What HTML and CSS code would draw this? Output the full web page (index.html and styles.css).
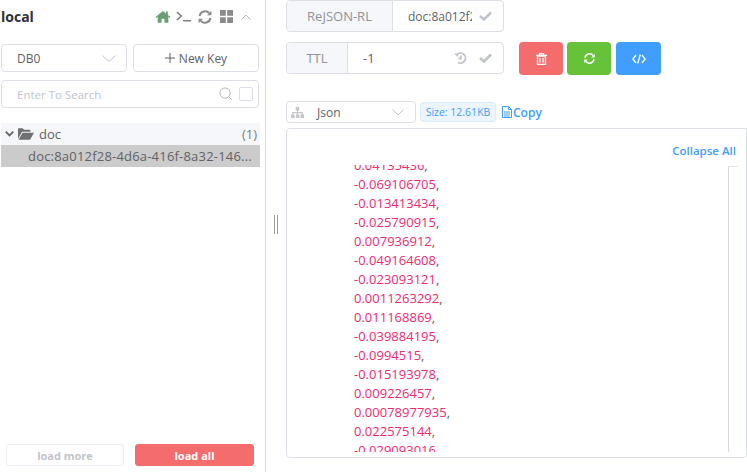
FILE: index.html
```html
<!DOCTYPE html>
<html lang="en">
<head>
<meta charset="utf-8">
<title>local</title>
<link rel="stylesheet" href="styles.css">
</head>
<body>
<div class="app">
  <aside class="side">
    <div class="conn">
      <span class="conn-name">local</span>
      <span class="conn-icons">
        <svg width="16" height="13" viewBox="0 0 18 14"><path fill="#6a9f74" d="M9 .8 .6 7.600l.9 1L3 7.400V14h4.400V9.600h3.200V14H15V7.400l1.500 1.200.9-1-3-2.400V1.500h-2v2.100z"/></svg>
        <svg class="ic-prompt" width="16" height="11" viewBox="0 0 18 12"><path fill="none" stroke="#777" stroke-width="1.600" d="M1 1l5 4.500-5 4.500"/><path stroke="#777" stroke-width="1.600" d="M8 10.800h9"/></svg>
        <svg class="ic-refresh" width="14" height="14" viewBox="0 0 14 14"><path fill="none" stroke="#8a8a8a" stroke-width="2" d="M1.600 6A5.500 5.500 0 0 1 11.200 3.200M12.400 8A5.500 5.500 0 0 1 2.800 10.800"/><path fill="#8a8a8a" d="M13.400 .8v4.400H9zM.6 13.200V8.800H5z"/></svg>
        <svg class="ic-grid" width="13" height="13" viewBox="0 0 13 13"><path fill="#8a8a8a" d="M0 0h5.800v5.800H0zM7.200 0H13v5.800H7.200zM0 7.200h5.800V13H0zM7.200 7.200H13V13H7.200z"/></svg>
        <svg class="ic-up" width="10" height="6" viewBox="0 0 10 6"><path fill="none" stroke="#b4b7bd" d="M.5 5.500 5 1l4.500 4.500"/></svg>
      </span>
    </div>
    <div class="row-two">
      <div class="select"><span>DB0</span><svg width="14" height="7" viewBox="0 0 14 7"><path fill="none" stroke="#c0c4cc" d="M.5.500 7 6.500 13.500.500"/></svg></div>
      <div class="new-key"><svg width="10" height="10" viewBox="0 0 10 10"><path stroke="#606266" d="M5 0v10M0 5h10"/></svg>New Key</div>
    </div>
    <div class="search">
      <span class="ph">Enter To Search</span>
      <svg width="14" height="14" viewBox="0 0 15 15"><circle cx="6.500" cy="6.500" r="5.500" fill="none" stroke="#b0b3ba"/><path stroke="#b0b3ba" d="M10.500 10.500 14 14"/></svg>
      <span class="check"></span>
    </div>
    <div class="tree">
      <div class="folder">
        <svg width="9" height="6" viewBox="0 0 9 6"><path fill="none" stroke="#666" stroke-width="1.800" d="M.7.700 4.500 4.500 8.300.700"/></svg>
        <svg class="ic-folder" width="16" height="12" viewBox="0 0 18 13"><path fill="#6f7072" d="M0 12V1.200C0 .5.500 0 1.200 0h4l1.600 1.800h6c.7 0 1.200.500 1.200 1.200v1H4.500zM.6 13l4.500-8H18l-4.500 8z"/></svg>
        <span class="folder-name">doc</span>
        <span class="count">(1)</span>
      </div>
      <div class="leaf">doc:8a012f28-4d6a-416f-8a32-146...</div>
    </div>
    <div class="load">
      <button class="btn-more">load more</button>
      <button class="btn-all">load all</button>
    </div>
  </aside>
  <main class="main">
    <span class="grip"></span>
    <div class="group">
      <span class="addon addon-type">ReJSON-RL</span>
      <span class="field"><span class="key-val">doc:8a012f28</span>
        <svg width="13" height="10" viewBox="0 0 13 10"><path fill="none" stroke="#c0c4cc" stroke-width="2.600" d="M1 5l4 3.500L12 1.500"/></svg></span>
    </div>
    <div class="ttl-row">
      <div class="group">
        <span class="addon addon-ttl">TTL</span>
        <span class="field"><span class="ttl-val">-1</span>
          <svg width="13" height="12" viewBox="0 0 13 12"><path fill="none" stroke="#c0c4cc" stroke-width="1.800" d="M2.500 3A5 5 0 1 1 4 10.500M6.800 3.500V6.500H4.500"/><path fill="#c0c4cc" d="M0 1.500h4.500L3.500 5z"/></svg>
          <svg class="ok2" width="13" height="10" viewBox="0 0 13 10"><path fill="none" stroke="#c0c4cc" stroke-width="2.600" d="M1 5l4 3.500L12 1.500"/></svg></span>
      </div>
      <button class="act red"><svg width="11" height="12" viewBox="0 0 11 12"><path fill="none" stroke="#fff" stroke-width="1.300" d="M1.500 3h8v8.300h-8zM0 2.300h11M3.500 2V.7h4V2M4 5v4.500M7 5v4.500"/></svg></button>
      <button class="act green"><svg width="11" height="11" viewBox="0 0 11 11"><path fill="none" stroke="#fff" stroke-width="1.500" d="M1 4.800A4.500 4.500 0 0 1 9 2.500M10 6.200A4.500 4.500 0 0 1 2 8.500"/><path fill="#fff" d="M10.800 1v3.500H7.300zM.2 10V6.500h3.500z"/></svg></button>
      <button class="act blue"><svg width="14" height="10" viewBox="0 0 14 10"><path fill="none" stroke="#fff" stroke-width="1.300" d="M4 1 .9 5 4 9M10 1l3.100 4L10 9M8.300.5 5.700 9.500"/></svg></button>
    </div>
    <div class="viewer-bar">
      <div class="fmt">
        <svg width="13" height="11" viewBox="0 0 13 11"><path fill="#c4c6cb" d="M4.700 0h3.600v3.400H7v1.600h4.800v2.600H13V11H9.400V7.600h1.200V6.200H7.100v1.400h1.300V11H4.800V7.600h1.100V6.200H2.400v1.400h1.200V11H0V7.600h1.200V5H6V3.400H4.700z"/></svg>
        <span class="fmt-name">Json</span>
        <svg width="12" height="7" viewBox="0 0 12 7"><path fill="none" stroke="#c0c4cc" d="M.5.500 6 6 11.500.500"/></svg>
      </div>
      <span class="tag">Size: 12.61KB</span>
      <a class="copy"><svg width="10" height="12" viewBox="0 0 10 12"><path fill="none" stroke="#409eff" d="M.5.500h6l3 3v8h-9zM6.500.500v3h3M2 6h6M2 8h6M2 10h6"/></svg>Copy</a>
    </div>
    <div class="viewer">
      <a class="collapse">Collapse All</a>
      <div class="scroll-wrap">
        <div class="code">
          <div><span class="num">0.04135436</span>,</div>
          <div><span class="num">-0.069106705</span>,</div>
          <div><span class="num">-0.013413434</span>,</div>
          <div><span class="num">-0.025790915</span>,</div>
          <div><span class="num">0.007936912</span>,</div>
          <div><span class="num">-0.049164608</span>,</div>
          <div><span class="num">-0.023093121</span>,</div>
          <div><span class="num">0.0011263292</span>,</div>
          <div><span class="num">0.011168869</span>,</div>
          <div><span class="num">-0.039884195</span>,</div>
          <div><span class="num">-0.0994515</span>,</div>
          <div><span class="num">-0.015193978</span>,</div>
          <div><span class="num">0.009226457</span>,</div>
          <div><span class="num">0.00078977935</span>,</div>
          <div><span class="num">0.022575144</span>,</div>
          <div><span class="num">-0.029093016</span>,</div>
        </div>
        <span class="rail"></span>
      </div>
    </div>
  </main>
</div>
</body>
</html>
```
FILE: styles.css
```css
* { box-sizing: border-box; }
html, body { margin: 0; height: 100%; overflow: hidden; background: #fff; }
body { font-family: "Open Sans", "Noto Sans", sans-serif; font-size: 12px; color: #606266; }
svg { display: block; flex: none; }
.app { display: flex; height: 472px; }

.side { width: 266px; flex: none; border-right: 1px solid #dfdfe5; padding: 0 6px 0 1px; display: flex; flex-direction: column; }
.conn { display: flex; align-items: center; justify-content: space-between; height: 33px; padding-right: 8px; }
.conn-name { font-weight: 700; font-size: 14px; color: #303133; }
.conn-icons { display: flex; align-items: center; gap: 5px; }
.ic-prompt { margin-left: 0; }
.ic-refresh { margin-left: 1px; }
.ic-grid { margin-left: 3px; }
.ic-up { margin-left: 3px; }
.row-two { display: flex; gap: 6px; margin-top: 11px; }
.select, .new-key { height: 28px; width: 126px; border: 1px solid #dcdfe6; border-radius: 4px; display: flex; align-items: center; }
.select { justify-content: space-between; padding: 0 10px 0 15px; }
.new-key { justify-content: center; gap: 4px; }
.search { margin-top: 8px; height: 28px; border: 1px solid #dcdfe6; border-radius: 4px; display: flex; align-items: center; padding: 0 5px 0 15px; gap: 6px; }
.ph { flex: 1; color: #c0c4cc; font-size: 11.500px; }
.check { width: 14px; height: 14px; border: 1px solid #dcdfe6; border-radius: 2px; }
.tree { margin: 15px -1px 0 0; }
.folder { height: 22px; background: #f5f7fa; display: flex; align-items: center; padding: 0 3px 0 4px; gap: 3px; font-size: 13px; }
.ic-folder { margin-left: 1px; }
.folder-name { flex: 1; margin-left: 2px; }
.count { color: #7b7e84; }
.leaf { height: 22px; background: #cbcbcb; padding-left: 27px; display: flex; align-items: center; font-size: 13px; letter-spacing: .2px; white-space: nowrap; }
.load { margin-top: auto; margin-bottom: 6px; display: flex; gap: 11px; padding: 0 5px; }
.load button { height: 22px; border-radius: 3px; font: 700 11px "Open Sans", sans-serif; padding: 0; }
.btn-more { width: 118px; background: #fff; border: 1px solid #ebeef5; color: #c0c4cc; }
.btn-all { width: 119px; background: #f56c6c; border: 1px solid #f56c6c; color: #fff; }

.main { flex: 1; min-width: 0; padding-left: 20px; position: relative; }
.grip { position: absolute; left: 8px; top: 215px; width: 4px; height: 19px; border-left: 1px solid #9a9a9a; border-right: 1px solid #9a9a9a; }
.group { display: flex; width: 218px; height: 32px; border: 1px solid #dcdfe6; border-radius: 4px; overflow: hidden; }
.addon { background: #f5f7fa; border-right: 1px solid #dcdfe6; color: #909399; display: flex; align-items: center; justify-content: center; flex: none; font-size: 13px; }
.addon-type { width: 106px; }
.addon-ttl { width: 61px; }
.field { flex: 1; min-width: 0; display: flex; align-items: center; padding: 0 11px 0 15px; }
.key-val { flex: 1; min-width: 0; overflow: hidden; white-space: nowrap; margin-right: 7px; }
.ttl-val { flex: 1; font-size: 13px; }
.ok2 { margin-left: 12px; }
.ttl-row { display: flex; align-items: flex-start; margin-top: 10px; }
.act { width: 44px; height: 33px; border: 0; border-radius: 4px; margin-left: 4px; display: flex; align-items: center; justify-content: center; padding: 0; }
.act.red { background: #f56c6c; margin-left: 15px; }
.act.green { background: #67c23a; }
.act.blue { background: #409eff; width: 45px; margin-left: 5px; }
.viewer-bar { display: flex; align-items: center; margin-top: 26px; height: 22px; }
.fmt { width: 130px; height: 22px; border: 1px solid #dcdfe6; border-radius: 4px; display: flex; align-items: center; padding: 0 11px 0 4px; }
.fmt-name { flex: 1; margin-left: 13px; }
.tag { margin-left: 4px; height: 20px; width: 76px; background: #ecf5ff; border: 1px solid #d9ecff; border-radius: 3px; color: #409eff; font-size: 10.500px; display: flex; align-items: center; justify-content: center; white-space: nowrap; }
.copy { margin-left: 6px; color: #409eff; display: flex; align-items: center; gap: 1px; font-weight: 600; }
.viewer { margin-top: 5px; height: 330px; width: 461px; padding-top: 36px; border: 1px solid #dcdfe6; border-radius: 4px 0 4px 4px; position: relative; }
.collapse { position: absolute; right: 10px; top: 14px; color: #409eff; font-size: 11.500px; font-weight: 600; }
.scroll-wrap { height: 287px; position: relative; overflow: hidden; }
.code { padding-left: 67px; margin-top: -9px; font-size: 13px; line-height: 19px; color: #606266; }
.num { color: #f02a70; }
.rail { position: absolute; top: 1px; bottom: 0; right: 8px; width: 10px; border-left: 1px solid #d8d8d8; border-top: 1px solid #e4e4e4; }
```
